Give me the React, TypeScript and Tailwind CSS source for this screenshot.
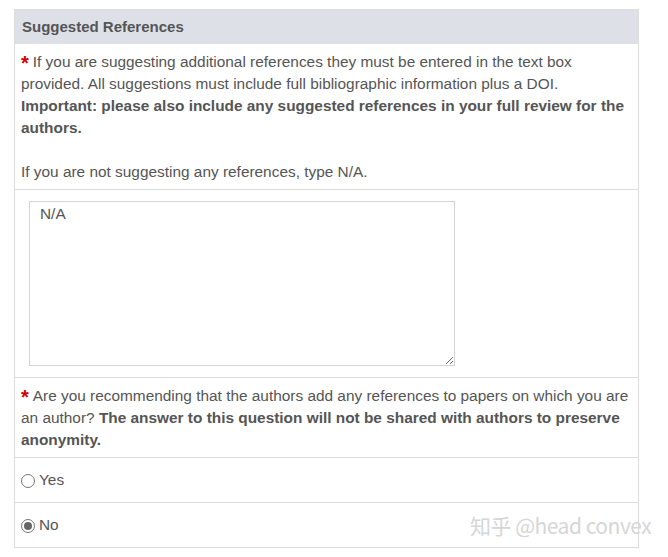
import { useState } from "react";

function Req() {
  return <span className="text-[#d40000] font-bold text-[20px] leading-[0] align-[-3px] mr-[4px]">*</span>;
}

function Radio({ checked }: { checked: boolean }) {
  return (
    <span className="inline-flex w-[14px] h-[14px] rounded-full border border-[#777] bg-white items-center justify-center mr-[4px] translate-y-[1px]">
      {checked && <span className="w-[8px] h-[8px] rounded-full bg-[#666]" />}
    </span>
  );
}

export default function App() {
  const [choice, setChoice] = useState<"yes" | "no">("no");
  const [refs, setRefs] = useState("N/A");

  return (
    <div className="relative w-[668px] h-[557px] bg-white font-['Liberation_Sans',Arial,sans-serif] text-[#555] text-[15.4px] leading-[22px]">
      <div className="pt-[9px] pl-[14px]">
        <div className="w-[625px] border border-[#dcdcdc]">
          <div className="h-[34px] bg-[#dde1e7] px-[7px] flex items-center font-bold text-[15px] text-[#555]">
            Suggested References
          </div>

          <div className="pl-[6px] pr-[2px] pt-[7px] pb-[6px]">
            <p>
              <Req />
              If you are suggesting additional references they must be entered in the text box provided. All suggestions
              must include full bibliographic information plus a DOI.{" "}
              <b>Important: please also include any suggested references in your full review for the authors.</b>
            </p>
            <p className="mt-[22px]">If you are not suggesting any references, type N/A.</p>
          </div>

          <div className="border-t border-[#dcdcdc] px-[14px] pt-[11px] pb-[11px]">
            <textarea
              value={refs}
              onChange={(e) => setRefs(e.target.value)}
              className="block w-[426px] h-[165px] border border-[#d4d4d4] px-[10px] py-[1px] text-[15.4px] text-[#555] outline-none"
            />
          </div>

          <div className="border-t border-[#dcdcdc] pl-[6px] pr-[2px] pt-[7px] pb-[6px]">
            <p>
              <Req />
              Are you recommending that the authors add any references to papers on which you are an author?{" "}
              <b>The answer to this question will not be shared with authors to preserve anonymity.</b>
            </p>
          </div>

          <label
            className="border-t border-[#dcdcdc] h-[45px] px-[6px] flex items-center cursor-pointer"
            onClick={() => setChoice("yes")}
          >
            <Radio checked={choice === "yes"} />
            Yes
          </label>
          <label
            className="border-t border-[#dcdcdc] h-[45px] px-[6px] flex items-center cursor-pointer"
            onClick={() => setChoice("no")}
          >
            <Radio checked={choice === "no"} />
            No
          </label>
        </div>
      </div>

      <div className="absolute left-[470px] top-[512px] text-[21px] leading-[26px] text-[#d6d6d6] font-['Noto_Sans_CJK_SC','Liberation_Sans',sans-serif] tracking-[-0.5px] pointer-events-none">
        知乎 @head convex
      </div>
    </div>
  );
}
